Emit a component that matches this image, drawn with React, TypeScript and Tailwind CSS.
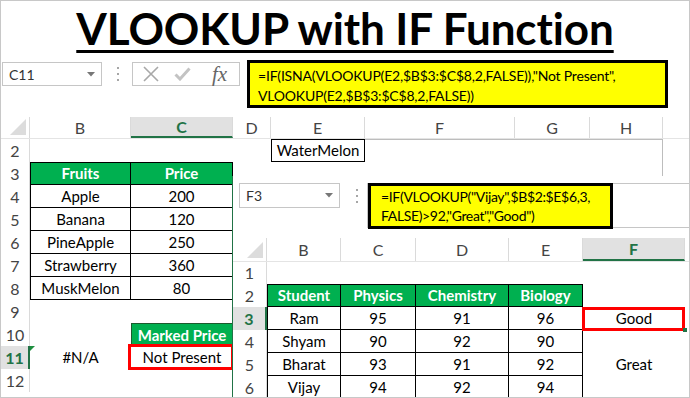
import React from "react";

const ff = "font-[family-name:Lato,'Open_Sans',sans-serif]";

function ColHead({ w, label, active }: { w: string; label: string; active?: boolean }) {
  return (
    <div
      className={`${w} h-full shrink-0 flex items-center justify-center border-r border-[#dadada] text-[16px] ${
        active ? "bg-[#e1e1e1] text-[#217346] font-bold border-b-2 border-b-[#217346]" : "text-[#444]"
      }`}
    >
      {label}
    </div>
  );
}

function RowHead({ w, n, active }: { w: string; n: number; active?: boolean }) {
  return (
    <div
      className={`${w} h-full shrink-0 flex items-center justify-center text-[16px] ${
        active ? "bg-[#e1e1e1] text-[#217346] font-bold border-r-2 border-[#217346]" : "text-[#444] border-r border-[#dadada]"
      }`}
    >
      {n}
    </div>
  );
}

function Corner({ w }: { w: string }) {
  return (
    <div className={`${w} h-full shrink-0 flex items-end justify-end pr-[3px] pb-[3px] border-r border-[#dadada]`}>
      <svg width="16" height="16" viewBox="0 0 16 16">
        <polygon points="16,0 16,16 0,16" fill="#dcdcdc" />
      </svg>
    </div>
  );
}

function NameBox({ label, w }: { label: string; w: string }) {
  return (
    <div className={`${w} h-full shrink-0 border border-[#c6c6c6] bg-white flex items-center justify-between pl-[6px] pr-[6px] text-[14px] text-[#333]`}>
      <span>{label}</span>
      <svg width="8" height="5" viewBox="0 0 8 5">
        <polygon points="0,0 8,0 4,4.5" fill="#777" />
      </svg>
    </div>
  );
}

function Dots() {
  return (
    <div className="flex flex-col gap-[4px] items-center w-[3px]">
      <span className="w-[2px] h-[2px] bg-[#a6a6a6]" />
      <span className="w-[2px] h-[2px] bg-[#a6a6a6]" />
      <span className="w-[2px] h-[2px] bg-[#a6a6a6]" />
    </div>
  );
}

const tb = "h-full shrink-0 flex items-center justify-center border-r border-b border-black text-[15px] text-black";
const th = "h-full shrink-0 flex items-center justify-center border-r border-b border-black bg-[#00b050] text-white font-bold text-[15px]";

export default function App() {
  const fruits: [string, number][] = [
    ["Apple", 200],
    ["Banana", 120],
    ["PineApple", 250],
    ["Strawberry", 360],
    ["MuskMelon", 80],
  ];
  const students: [string, number, number, number][] = [
    ["Ram", 95, 91, 96],
    ["Shyam", 90, 92, 90],
    ["Bharat", 93, 91, 92],
    ["Vijay", 94, 92, 94],
  ];

  return (
    <div className={`relative w-[690px] h-[398px] overflow-hidden bg-white border border-[#c8c8c8] ${ff}`}>
      {/* title */}
      <div className="h-[61px] flex justify-center pt-[3px]">
        <h1 className="text-[44px] leading-[48px] font-bold text-black underline decoration-[3px] underline-offset-[5px] tracking-[-0.1px]">
          VLOOKUP with IF Function
        </h1>
      </div>

      {/* formula bar 1 */}
      <div className="h-[55px]">
        <div className="h-[24px] flex items-center">
          <div className="ml-[1px] h-full flex">
            <NameBox label="C11" w="w-[100px]" />
          </div>
          <div className="ml-[14px]">
            <Dots />
          </div>
          <div className="ml-[13px] w-[108px] h-full border border-[#c6c6c6] flex items-center pl-[10px] gap-[15px]">
            <svg width="16" height="16" viewBox="0 0 16 16">
              <path d="M1 1 L15 15 M15 1 L1 15" stroke="#a8a8a8" strokeWidth="1.6" fill="none" />
            </svg>
            <svg width="17" height="14" viewBox="0 0 17 14">
              <path d="M1.5 7.5 L6 12 L15.5 1.5" stroke="#c3c3c3" strokeWidth="3" fill="none" />
            </svg>
            <span className="ml-[6px] font-[family-name:'Liberation_Serif',serif] italic text-[21px] leading-none text-[#666]">fx</span>
          </div>
        </div>
      </div>

      {/* sheet 1 column headers */}
      <div className="h-[22px] flex border-b border-[#e4e4e4]">
        <Corner w="w-[29px]" />
        <ColHead w="w-[101px]" label="B" />
        <ColHead w="w-[102px]" label="C" active />
        <ColHead w="w-[38px]" label="D" />
        <ColHead w="w-[94px]" label="E" />
        <ColHead w="w-[150px]" label="F" />
        <ColHead w="w-[75px]" label="G" />
        <ColHead w="w-[73px]" label="H" />
      </div>

      {/* row 2 */}
      <div className="h-[23px] flex">
        <RowHead w="w-[29px]" n={2} />
        <div className="w-[101px] shrink-0" />
        <div className="w-[102px] shrink-0" />
        <div className="w-[38px] shrink-0" />
        <div className="w-[94px] shrink-0 h-full border border-black flex items-center justify-center text-[15px]">WaterMelon</div>
        <div className="w-[150px] shrink-0 border-t border-[#bdbdbd]" />
        <div className="w-[75px] shrink-0 border-t border-[#bdbdbd]" />
        <div className="w-[73px] shrink-0 border-t border-r border-[#bdbdbd]" />
      </div>

      {/* row 3 */}
      <div className="h-[23px] flex">
        <RowHead w="w-[29px]" n={3} />
        <div className={`w-[101px] border-l border-t ${th}`}>Fruits</div>
        <div className={`w-[102px] border-t ${th}`}>Price</div>
        <div className="w-[38px] shrink-0" />
        <div className="w-[94px] shrink-0" />
        <div className="w-[150px] shrink-0" />
        <div className="w-[75px] shrink-0" />
        <div className="w-[73px] shrink-0 border-r border-[#bdbdbd]" />
      </div>

      {fruits.map(([f, p], i) => (
        <div key={f} className="h-[23px] flex">
          <RowHead w="w-[29px]" n={i + 4} />
          <div className={`w-[101px] border-l ${tb}`}>{f}</div>
          <div className={`w-[102px] ${tb}`}>{p}</div>
        </div>
      ))}

      <div className="h-[23px] flex">
        <RowHead w="w-[29px]" n={9} />
      </div>
      <div className="h-[23px] flex">
        <RowHead w="w-[29px]" n={10} />
        <div className="w-[101px] shrink-0" />
        <div className="w-[101px] h-full shrink-0 flex items-center justify-center bg-[#00b050] border-l border-t border-[#1c5a2e] text-white font-bold text-[15px] whitespace-nowrap">
          Marked Price
        </div>
      </div>
      <div className="h-[23px] flex">
        <RowHead w="w-[29px]" n={11} active />
        <div className="relative w-[101px] shrink-0 flex items-center justify-center text-[15px]">
          <svg className="absolute left-0 top-0" width="5" height="5" viewBox="0 0 5 5">
            <polygon points="0,0 5,0 0,5" fill="#1e8f3f" />
          </svg>
          #N/A
        </div>
        <div className="relative w-[102px] shrink-0 flex items-center justify-center text-[15px]">
          <div className="absolute -left-[3px] -top-[2px] -right-[1px] -bottom-[1px] border-[3px] border-[#ff0000]" />
          Not Present
        </div>
      </div>
      <div className="h-[23px] flex">
        <RowHead w="w-[29px]" n={12} />
      </div>

      {/* formula callout 1 */}
      <div className="absolute left-[246px] top-[59px] w-[421px] h-[48px] bg-[#ffff00] border-[3px] border-black pl-[8px] pt-[3px] text-[14px] leading-[20px] tracking-[-0.2px] text-black">
        <div>=IF(ISNA(VLOOKUP(E2,$B$3:$C$8,2,FALSE)),"Not Present",</div>
        <div>VLOOKUP(E2,$B$3:$C$8,2,FALSE))</div>
      </div>

      {/* second sheet screenshot */}
      <div className="absolute left-[231px] top-[175px] right-0 bottom-0 bg-white border-l border-[#217346]">
        <div className="h-[62px] pt-[7px] flex items-start">
          <div className="ml-[6px] h-[25px] flex">
            <NameBox label="F3" w="w-[101px]" />
          </div>
          <div className="ml-[15px] mt-[6px]">
            <Dots />
          </div>
          <div className="ml-[9px] flex-1 h-[45px] border-t border-b border-l border-[#c6c6c6]" />
        </div>

        <div className="h-[23px] flex">
          <Corner w="w-[34px]" />
          <ColHead w="w-[74px]" label="B" />
          <ColHead w="w-[75px]" label="C" />
          <ColHead w="w-[93px]" label="D" />
          <ColHead w="w-[74px]" label="E" />
          <ColHead w="w-[102px]" label="F" active />
        </div>

        <div className="h-[23px] flex border-t border-[#e4e4e4]">
          <RowHead w="w-[34px]" n={1} />
        </div>
        <div className="h-[23px] flex">
          <RowHead w="w-[34px]" n={2} />
          <div className={`w-[74px] border-l border-t ${th}`}>Student</div>
          <div className={`w-[75px] border-t ${th}`}>Physics</div>
          <div className={`w-[93px] border-t ${th}`}>Chemistry</div>
          <div className={`w-[74px] border-t ${th}`}>Biology</div>
        </div>
        {students.map(([s, p, c, b], i) => (
          <div key={s} className="h-[23px] flex">
            <RowHead w="w-[34px]" n={i + 3} active={i === 0} />
            <div className={`w-[74px] border-l ${tb}`}>{s}</div>
            <div className={`w-[75px] ${tb}`}>{p}</div>
            <div className={`w-[93px] ${tb}`}>{c}</div>
            <div className={`w-[74px] ${tb}`}>{b}</div>
            <div className="relative w-[102px] shrink-0 flex items-center justify-center text-[15px]">
              {i === 0 && (
                <>
                  <div className="absolute -left-[1px] top-0 right-0 -bottom-[1px] border-[3px] border-[#ff0000]" />
                  <span className="absolute -right-[2px] -bottom-[2px] w-[4px] h-[4px] bg-[#217346]" />
                  Good
                </>
              )}
              {i === 2 && "Great"}
            </div>
          </div>
        ))}

        {/* formula callout 2 */}
        <div className="absolute left-[135px] top-[7px] w-[245px] h-[46px] bg-[#ffff00] border-[3px] border-black pl-[10px] pt-[1px] text-[14px] leading-[19px] tracking-[-0.35px] text-black">
          <div>=IF(VLOOKUP("Vijay",$B$2:$E$6,3,</div>
          <div>FALSE)&gt;92,"Great","Good")</div>
        </div>
      </div>
    </div>
  );
}
